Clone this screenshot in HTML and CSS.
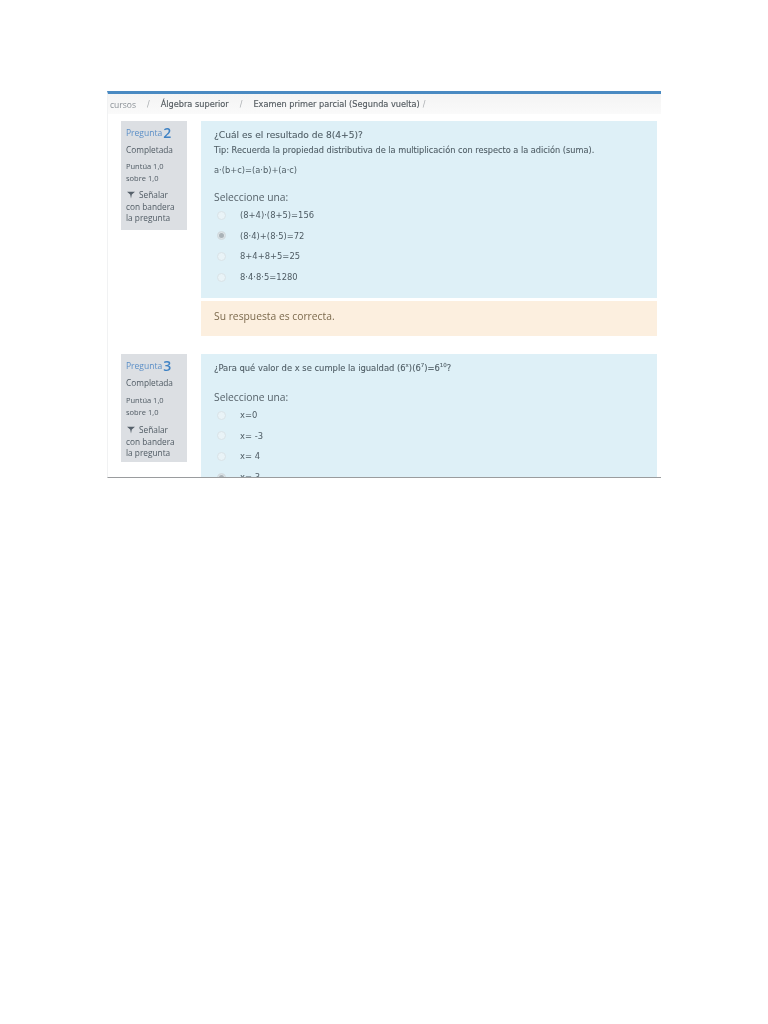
FILE: index.html
```html
<!DOCTYPE html>
<html lang="es">
<head>
<meta charset="utf-8">
<title>Examen primer parcial</title>
<link rel="stylesheet" href="styles.css">
</head>
<body>
<main class="shot">
  <nav class="crumbs">
    <span class="crumb-muted">cursos</span><span class="sep">/</span>
    <span class="crumb">Álgebra superior</span><span class="sep">/</span>
    <span class="crumb">Examen primer parcial (Segunda vuelta)</span><span class="sep last">/</span>
  </nav>
  <div class="questions">
    <section class="question q2">
      <aside class="info">
        <div class="qno">Pregunta <b>2</b></div>
        <div class="state">Completada</div>
        <div class="grade">Puntúa 1,0<br>sobre 1,0</div>
        <div class="flag"><svg class="flag-icon" viewBox="0 0 10 10"><path d="M0 1 L10 1 L6 4.5 L5 9.5 L4 4.5 Z"/></svg>Señalar<br>con bandera<br>la pregunta</div>
      </aside>
      <div class="body">
        <div class="panel panel-q2">
          <p class="q-line q-lead">¿Cuál es el resultado de 8(4+5)?</p>
          <p class="q-line q-tip">Tip: Recuerda la propiedad distributiva de la multiplicación con respecto a la adición (suma).</p>
          <p class="q-line formula">a·(b+c)=(a·b)+(a·c)</p>
          <p class="prompt">Seleccione una:</p>
          <div class="opt"><span class="radio"></span><span>(8+4)·(8+5)=156</span></div>
          <div class="opt"><span class="radio on"></span><span>(8·4)+(8·5)=72</span></div>
          <div class="opt"><span class="radio"></span><span>8+4+8+5=25</span></div>
          <div class="opt"><span class="radio"></span><span>8·4·8·5=1280</span></div>
        </div>
        <div class="feedback">Su respuesta es correcta.</div>
      </div>
    </section>
    <section class="question q3">
      <aside class="info">
        <div class="qno">Pregunta <b>3</b></div>
        <div class="state">Completada</div>
        <div class="grade">Puntúa 1,0<br>sobre 1,0</div>
        <div class="flag"><svg class="flag-icon" viewBox="0 0 10 10"><path d="M0 1 L10 1 L6 4.5 L5 9.5 L4 4.5 Z"/></svg>Señalar<br>con bandera<br>la pregunta</div>
      </aside>
      <div class="body">
        <div class="panel panel-q3">
          <p class="q-line q-tip">¿Para qué valor de x se cumple la igualdad (6<sup>x</sup>)(6<sup>7</sup>)=6<sup>10</sup>?</p>
          <p class="prompt prompt-q3">Seleccione una:</p>
          <div class="opt"><span class="radio"></span><span>x=0</span></div>
          <div class="opt"><span class="radio"></span><span>x= -3</span></div>
          <div class="opt"><span class="radio"></span><span>x= 4</span></div>
          <div class="opt"><span class="radio on"></span><span>x= 3</span></div>
        </div>
      </div>
    </section>
  </div>
</main>
</body>
</html>
```
FILE: styles.css
```css
html, body { margin: 0; padding: 0; background: #fff; }
body { height: 1024px; overflow: hidden; }
p { margin: 0; }

.shot {
  box-sizing: border-box;
  width: 554px;
  height: 387px;
  margin: 91px 0 0 107px;
  overflow: hidden;
  border-top: 3px solid #4a8ac2;
  border-left: 1px solid #f1f2f3;
  border-bottom: 1px solid #9a9c9e;
  font-family: "DejaVu Sans", sans-serif;
  color: #48565e;
  filter: blur(0.6px);
}

.crumbs {
  display: flex;
  align-items: center;
  height: 20px;
  padding-left: 2px;
  background: linear-gradient(#f4f4f4, #fafafa);
  font-size: 8.2px;
  white-space: nowrap;
  color: #555c61;
}
.crumb-muted { color: #8a9096; font-family: "Open Sans", sans-serif; font-size: 8.5px; }
.crumb { -webkit-text-stroke: 0.15px #555c61; }
.sep { color: #a9adb0; margin: 0 11px; font-size: 8px; }
.sep.last { margin: 0 0 0 3px; }

.questions { padding: 7px 4px 0 13px; }
.question { display: flex; gap: 14px; }
.q3 { margin-top: 18px; }

.info {
  box-sizing: border-box;
  flex: 0 0 66px;
  align-self: flex-start;
  background: #dcdfe3;
  padding: 5px 3px 0 5px;
  font-family: "Open Sans", sans-serif;
  font-size: 8.3px;
  line-height: 12px;
  color: #4f5a63;
  white-space: nowrap;
}
.q2 .info { height: 109px; }
.q3 .info { height: 108px; }
.qno { display: flex; align-items: center; gap: 1px; height: 14px; color: #5b8fc7; font-size: 8.5px; line-height: 14px; }
.qno b { color: #3f82c4; font-size: 14px; font-weight: 600; }
.state { margin-top: 4px; }
.grade { margin-top: 4px; font-size: 7.5px; }
.flag { margin-top: 5px; line-height: 11.5px; }
.q3 .grade { margin-top: 5px; }
.q3 .flag { margin-top: 6px; }
.flag-icon { width: 8px; height: 8px; margin: 0 4px 0 1px; vertical-align: -1px; fill: #55606a; }

.body { flex: 1; min-width: 0; display: flex; flex-direction: column; gap: 3px; }
.panel { background: #def0f7; padding-left: 13px; box-sizing: border-box; }
.panel-q2 { height: 177px; padding-top: 7px; }
.panel-q3 { height: 130px; padding-top: 7px; }

.q-line { font-size: 8.4px; line-height: 15px; color: #4f5d65; white-space: nowrap; }
.q-lead { font-size: 9.1px; -webkit-text-stroke: 0.1px #4f5d65; }
.q-tip { font-size: 8.2px; -webkit-text-stroke: 0.1px #4f5d65; }
.q3 .q-tip { font-size: 8.4px; }
.q-line sup { font-size: 5.5px; line-height: 0; }
.formula { margin-top: 5px; font-size: 8.3px; }
.prompt {
  margin-top: 12px;
  font-family: "Open Sans", sans-serif;
  font-size: 10.3px;
  line-height: 15px;
  color: #56626a;
}
.prompt-q3 { margin-top: 14px; }

.opt {
  display: flex;
  align-items: center;
  height: 20.6px;
  font-size: 8.4px;
  color: #4e5b63;
  white-space: nowrap;
}
.radio {
  box-sizing: border-box;
  flex: 0 0 9px;
  height: 9px;
  margin: 0 14px 0 3px;
  border-radius: 50%;
  background: #e9f3f7;
  border: 1px solid #d9e3e7;
}
.radio.on { background: #a9b2b7; box-shadow: inset 0 0 0 1px #dfe6e9; }

.feedback {
  box-sizing: border-box;
  height: 35px;
  display: flex;
  align-items: center;
  padding: 0 0 6px 13px;
  background: #fcefdf;
  font-family: "Open Sans", sans-serif;
  font-size: 10.3px;
  color: #7c6a4d;
}
```
